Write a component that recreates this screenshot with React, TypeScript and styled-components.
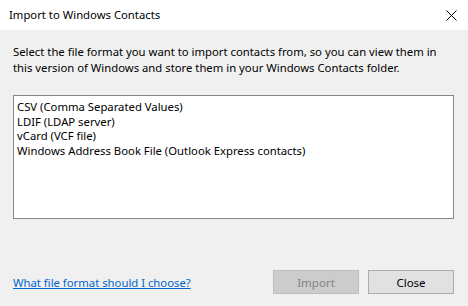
import React from "react";
import styled, { createGlobalStyle } from "styled-components";

const GlobalStyle = createGlobalStyle`
  html, body {
    margin: 0;
    padding: 0;
    background: #f0f0f0;
  }
  * {
    box-sizing: border-box;
  }
`;

const Window = styled.div`
  width: 468px;
  height: 306px;
  display: flex;
  flex-direction: column;
  background: #f0f0f0;
  font-family: "Noto Sans", "Segoe UI", sans-serif;
  font-size: 11.3px;
  color: #000;
`;

const TitleBar = styled.div`
  height: 30px;
  flex: none;
  display: flex;
  align-items: center;
  justify-content: space-between;
  background: #fff;
  padding-left: 9px;
  padding-right: 11px;
`;

const Title = styled.span`
  line-height: 16px;
`;

const CloseIcon = styled.svg`
  width: 11px;
  height: 11px;
  display: block;
`;

const Body = styled.div`
  flex: 1;
  display: flex;
  flex-direction: column;
  padding: 14px 14px 12px 13px;
`;

const Description = styled.p`
  margin: 0;
  line-height: 16px;
`;

const ListBox = styled.ul`
  list-style: none;
  margin: 19px 0 0;
  padding: 3px 3px;
  height: 124px;
  background: #fff;
  border: 1px solid #828790;
`;

const ListItem = styled.li`
  line-height: 15px;
  height: 14.7px;
  white-space: nowrap;
`;

const Footer = styled.div`
  margin-top: auto;
  display: flex;
  align-items: center;
  gap: 9px;
`;

const HelpLink = styled.a`
  margin-right: auto;
  color: #0066cc;
  text-decoration: underline;
  cursor: pointer;
`;

const Button = styled.button<{ disabled?: boolean }>`
  width: 86px;
  height: 24px;
  padding: 0;
  font-family: inherit;
  font-size: 11.5px;
  background: ${(p) => (p.disabled ? "#cccccc" : "#e1e1e1")};
  border: 1px solid ${(p) => (p.disabled ? "#bfbfbf" : "#adadad")};
  color: ${(p) => (p.disabled ? "#838383" : "#000")};
`;

const formats = [
  "CSV (Comma Separated Values)",
  "LDIF (LDAP server)",
  "vCard (VCF file)",
  "Windows Address Book File (Outlook Express contacts)",
];

export default function App() {
  return (
    <>
      <GlobalStyle />
      <Window>
        <TitleBar>
          <Title>Import to Windows Contacts</Title>
          <CloseIcon viewBox="0 0 11 11">
            <path d="M0.5 0.5 L10.5 10.5 M10.5 0.5 L0.5 10.5" stroke="#000" strokeWidth="1" />
          </CloseIcon>
        </TitleBar>
        <Body>
          <Description>
            Select the file format you want to import contacts from, so you can view them in
            this version of Windows and store them in your Windows Contacts folder.
          </Description>
          <ListBox>
            {formats.map((f) => (
              <ListItem key={f}>{f}</ListItem>
            ))}
          </ListBox>
          <Footer>
            <HelpLink>What file format should I choose?</HelpLink>
            <Button disabled>Import</Button>
            <Button>Close</Button>
          </Footer>
        </Body>
      </Window>
    </>
  );
}
